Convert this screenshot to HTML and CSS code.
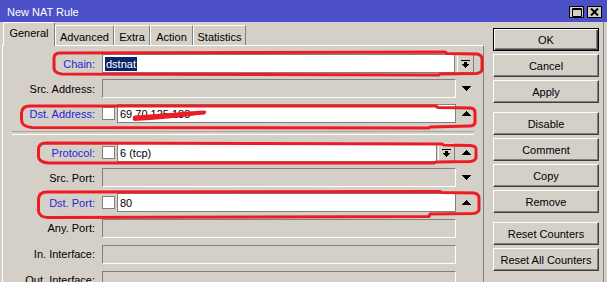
FILE: index.html
```html
<!DOCTYPE html>
<html>
<head>
<meta charset="utf-8">
<title>New NAT Rule</title>
<link rel="stylesheet" href="styles.css">
</head>
<body>
<div class="window">
  <div class="titlebar">
    <span class="title">New NAT Rule</span>
    <div class="tbtns">
      <span class="tbtn"><svg width="10" height="9" viewBox="0 0 10 9"><path d="M0.5 0.5h9v8h-9z M0.5 1.5h9" fill="none" stroke="#000"/></svg></span>
      <span class="tbtn"><svg width="9" height="8" viewBox="0 0 9 8"><path d="M1 0.5l7 7M8 0.5l-7 7" stroke="#000" stroke-width="2"/></svg></span>
    </div>
  </div>
  <div class="content">
    <div class="main">
      <div class="tabs">
        <div class="tab active t-general">General</div>
        <div class="tab t-advanced">Advanced</div>
        <div class="tab t-extra">Extra</div>
        <div class="tab t-action">Action</div>
        <div class="tab t-stats">Statistics</div>
      </div>
      <div class="panel">
        <div class="row">
          <div class="label hl">Chain:</div>
          <div class="field w-chain"><span class="sel">dstnat</span></div>
          <div class="dropbtn chain-drop"><svg width="9" height="8" viewBox="0 0 9 8"><path d="M0 0h9v1h-9z M3 2h3v2h-3z M1 4h7v1h-1v1h-1v1h-1v1h-1v-1h-1v-1h-1v-1h-1z" fill="#000"/></svg></div>
        </div>
        <div class="row">
          <div class="label">Src. Address:</div>
          <div class="field off w-full"></div>
          <div class="tail"><svg width="9" height="5" viewBox="0 0 9 5"><path d="M0 0h9v1h-1v1h-1v1h-1v1h-1v1h-1v-1h-1v-1h-1v-1h-1v-1h-1z" fill="#000"/></svg></div>
        </div>
        <div class="row">
          <div class="label hl">Dst. Address:</div>
          <div class="chk"></div>
          <div class="field w-chk">69.70.125.188</div>
          <div class="tail"><svg width="9" height="5" viewBox="0 0 9 5"><path d="M4 0h1v1h1v1h1v1h1v1h1v1h-9v-1h1v-1h1v-1h1v-1h1z" fill="#000"/></svg></div>
        </div>
        <div class="sep"></div>
        <div class="row">
          <div class="label hl">Protocol:</div>
          <div class="chk"></div>
          <div class="field w-proto">6 (tcp)</div>
          <div class="dropbtn proto-drop"><svg width="9" height="8" viewBox="0 0 9 8"><path d="M0 0h9v1h-9z M3 2h3v2h-3z M1 4h7v1h-1v1h-1v1h-1v1h-1v-1h-1v-1h-1v-1h-1z" fill="#000"/></svg></div>
          <div class="tail tail-proto"><svg width="9" height="5" viewBox="0 0 9 5"><path d="M4 0h1v1h1v1h1v1h1v1h1v1h-9v-1h1v-1h1v-1h1v-1h1z" fill="#000"/></svg></div>
        </div>
        <div class="row">
          <div class="label">Src. Port:</div>
          <div class="field off w-full"></div>
          <div class="tail"><svg width="9" height="5" viewBox="0 0 9 5"><path d="M0 0h9v1h-1v1h-1v1h-1v1h-1v1h-1v-1h-1v-1h-1v-1h-1v-1h-1z" fill="#000"/></svg></div>
        </div>
        <div class="row">
          <div class="label hl">Dst. Port:</div>
          <div class="chk"></div>
          <div class="field w-chk">80</div>
          <div class="tail"><svg width="9" height="5" viewBox="0 0 9 5"><path d="M4 0h1v1h1v1h1v1h1v1h1v1h-9v-1h1v-1h1v-1h1v-1h1z" fill="#000"/></svg></div>
        </div>
        <div class="row tall">
          <div class="label">Any. Port:</div>
          <div class="field off w-full"></div>
          <div class="tail"></div>
        </div>
        <div class="row tall">
          <div class="label">In. Interface:</div>
          <div class="field off w-full"></div>
          <div class="tail"></div>
        </div>
        <div class="row tall">
          <div class="label">Out. Interface:</div>
          <div class="field off w-full"></div>
          <div class="tail"></div>
        </div>
      </div>
    </div>
    <div class="side">
      <div class="btn default">OK</div>
      <div class="btn">Cancel</div>
      <div class="btn">Apply</div>
      <div class="btn group">Disable</div>
      <div class="btn">Comment</div>
      <div class="btn">Copy</div>
      <div class="btn">Remove</div>
      <div class="btn group">Reset Counters</div>
      <div class="btn">Reset All Counters</div>
    </div>
  </div>
  <svg class="marks" width="607" height="282" viewBox="0 0 607 282">
    <g fill="none" stroke="#ed1c24" stroke-width="3" stroke-linejoin="round" stroke-linecap="round">
      <path d="M60 53 L445 52 L447 53.5 L477 54 Q482 55 482 59 L482 70 Q481 73 476 73.5 L440 74 L439 75 L62 74 Q54 73 54 68 L54 58 Q54 53 60 53 Z"/>
      <path d="M30 106 L436 106 L438 107.5 L471 108 Q475 109 475 112 L475 123 Q474 126 470 126 L430 127 L429 128 L32 127.5 Q22 127 21.5 120 L21.5 113 Q22 106 30 106 Z"/>
      <path d="M46 143 L442 144 L444 145 L470 145.5 Q476 146 476 149 L476 158 Q475 161 470 161.5 L436 162 L434 163 L48 163 Q39 162 38.5 157 L38.5 149 Q39 143 46 143 Z"/>
      <path d="M47 192 L440 191.5 L442 192.5 L474 193 Q479 194 479 198 L479 210 Q478 213 473 213.5 L430 214 L429 216.5 L48 217.5 Q39 217 38.5 211 L38.5 199 Q39 192 47 192 Z"/>
    </g>
    <path d="M132 118.5 C 150 116, 178 114, 206 111 L205 114 C 180 117.5, 155 120, 134 121 Z" fill="#ed1c24"/>
    <path d="M135 117.5 C 160 116, 182 114, 204 112.5" fill="none" stroke="#ed1c24" stroke-width="4" stroke-linecap="round"/>
  </svg>
</div>
</body>
</html>
```
FILE: styles.css
```css
* { box-sizing: border-box; }

body {
  margin: 0;
  background: #d4d0c8;
  font-family: "Liberation Sans", Arial, sans-serif;
  font-size: 11px;
  color: #000;
}

.window {
  position: relative;
  width: 607px;
  height: 282px;
  overflow: hidden;
  background: #d4d0c8;
}

.titlebar {
  height: 22px;
  background: #4b50c8;
  display: flex;
  align-items: center;
  justify-content: space-between;
  padding: 0 5px 0 7px;
}

.title {
  color: #fff;
  font-size: 11px;
  margin-top: 1px;
}

.tbtns {
  display: flex;
  gap: 3px;
  margin-top: 2px;
}

.tbtn {
  width: 15px;
  height: 12px;
  border: 1px solid #000;
  background: #d4d0c8;
  display: flex;
  align-items: center;
  justify-content: center;
}

.content {
  display: flex;
  height: 260px;
  width: 604px;
  border-right: 1px solid #808080;
}

.main {
  width: 484px;
  padding-left: 2px;
  display: flex;
  flex-direction: column;
  flex: none;
}

.tabs {
  display: flex;
  height: 24px;
  align-items: flex-end;
  padding-left: 1px;
  position: relative;
  z-index: 1;
}

.tab {
  height: 20px;
  border: 1px solid;
  border-color: #fff #808080 transparent #fff;
  border-bottom: none;
  display: flex;
  align-items: center;
  justify-content: center;
  padding-top: 2px;
  background: #d4d0c8;
  flex: none;
}

.tab.active {
  height: 24px;
  margin-bottom: -1px;
  padding-top: 0;
  padding-bottom: 3px;
}

.t-general { width: 52px; }
.t-advanced { width: 59px; }
.t-extra { width: 36px; }
.t-action { width: 43px; }
.t-stats { width: 53px; }

.panel {
  flex: 1;
  border: 1px solid;
  border-color: #fff #808080 #808080 #fff;
  padding-top: 5px;
}

.row {
  display: flex;
  align-items: center;
  height: 25px;
}

.row.tall { height: 26px; }

.label {
  width: 92px;
  margin-right: 7px;
  text-align: right;
  flex: none;
  white-space: nowrap;
}

.label.hl { color: #2424dc; }

.field {
  height: 19px;
  border: 1px solid #808080;
  background: #fff;
  display: flex;
  align-items: center;
  padding-left: 2px;
  flex: none;
  white-space: nowrap;
}

.field.off {
  background: #d4d0c8;
  border-color: #808080 #fff #fff #808080;
}

.w-chain { width: 353px; }
.w-full { width: 354px; }
.w-chk { width: 339px; }
.w-proto { width: 320px; }

.sel {
  background: #0a246a;
  color: #fff;
  padding: 0 1px;
  line-height: 14px;
}

.chk {
  width: 13px;
  height: 13px;
  border: 1px solid #808080;
  background: #fff;
  margin-right: 2px;
  flex: none;
}

.dropbtn {
  width: 17px;
  height: 19px;
  background: #d4d0c8;
  border: 1px solid;
  border-color: #fff #808080 #808080 #fff;
  display: flex;
  align-items: center;
  justify-content: center;
  flex: none;
}

.chain-drop { margin-left: 2px; }
.proto-drop { margin-left: 1px; }

.tail {
  width: 18px;
  margin-left: 1px;
  display: flex;
  justify-content: center;
  flex: none;
}

.tail-proto { margin-left: 2px; }

.sep {
  height: 14px;
  margin-left: 9px;
  width: 462px;
  display: flex;
  align-items: center;
}

.sep::before {
  content: "";
  display: block;
  width: 100%;
  height: 2px;
  border-top: 1px solid #a8a49c;
  border-bottom: 1px solid #fff;
}

.side {
  width: 106px;
  margin-left: 9px;
  padding-top: 6px;
  display: flex;
  flex-direction: column;
  flex: none;
}

.btn {
  height: 23px;
  margin-bottom: 3px;
  border: 1px solid;
  border-color: #fff #404040 #404040 #fff;
  box-shadow: inset -1px -1px 0 #808080;
  display: flex;
  align-items: center;
  justify-content: center;
  color: #000;
  white-space: nowrap;
}

.btn.default {
  border: 1px solid #000;
  box-shadow: inset 1px 1px 0 #fff, inset -1px -1px 0 #404040, inset -2px -2px 0 #808080;
}

.btn.group { margin-top: 6px; }

.marks {
  position: absolute;
  left: 0;
  top: 0;
  pointer-events: none;
}
```
